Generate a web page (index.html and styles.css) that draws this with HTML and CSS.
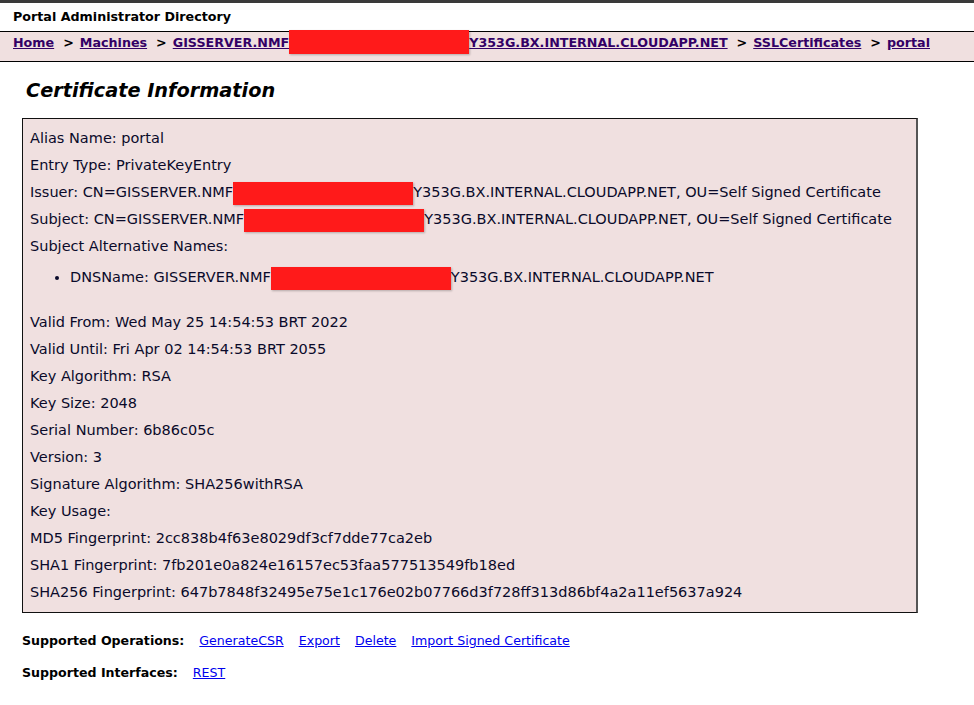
FILE: index.html
```html
<!DOCTYPE html>
<html>
<head>
<meta charset="utf-8">
<title>Portal Administrator Directory</title>
<link rel="stylesheet" href="styles.css">
</head>
<body>
<div class="topbar"></div>
<div class="title">Portal Administrator Directory</div>
<div class="crumbs">
  <a href="#">Home</a><span class="sep">&gt;</span><a href="#">Machines</a><span class="sep">&gt;</span><a href="#">GISSERVER.NMF<span class="redact crumb-redact"></span>Y353G.BX.INTERNAL.CLOUDAPP.NET</a><span class="sep">&gt;</span><a href="#">SSLCertificates</a><span class="sep">&gt;</span><a href="#">portal</a>
</div>
<div class="main">
  <h2 class="heading">Certificate Information</h2>
  <div class="box">
    <p>Alias Name: portal</p>
    <p>Entry Type: PrivateKeyEntry</p>
    <p>Issuer: CN=GISSERVER.NMF<span class="redact r1"></span>Y353G.BX.INTERNAL.CLOUDAPP.NET, OU=Self Signed Certificate</p>
    <p>Subject: CN=GISSERVER.NMF<span class="redact r1"></span>Y353G.BX.INTERNAL.CLOUDAPP.NET, OU=Self Signed Certificate</p>
    <p>Subject Alternative Names:</p>
    <ul class="names">
      <li>DNSName: GISSERVER.NMF<span class="redact r1"></span>Y353G.BX.INTERNAL.CLOUDAPP.NET</li>
    </ul>
    <p>Valid From: Wed May 25 14:54:53 BRT 2022</p>
    <p>Valid Until: Fri Apr 02 14:54:53 BRT 2055</p>
    <p>Key Algorithm: RSA</p>
    <p>Key Size: 2048</p>
    <p>Serial Number: 6b86c05c</p>
    <p>Version: 3</p>
    <p>Signature Algorithm: SHA256withRSA</p>
    <p>Key Usage:</p>
    <p>MD5 Fingerprint: 2cc838b4f63e8029df3cf7dde77ca2eb</p>
    <p>SHA1 Fingerprint: 7fb201e0a824e16157ec53faa577513549fb18ed</p>
    <p>SHA256 Fingerprint: 647b7848f32495e75e1c176e02b07766d3f728ff313d86bf4a2a11ef5637a924</p>
  </div>
  <div class="ops">
    <b>Supported Operations:</b>
    <a href="#">GenerateCSR</a><a href="#">Export</a><a href="#">Delete</a><a href="#">Import Signed Certificate</a>
  </div>
  <div class="ops ifaces">
    <b>Supported Interfaces:</b>
    <a href="#">REST</a>
  </div>
</div>
</body>
</html>
```

FILE: styles.css
```css
html, body {
  margin: 0;
  padding: 0;
  background: #ffffff;
}
body {
  font-family: "DejaVu Sans", Verdana, sans-serif;
  font-size: 13px;
  color: #000;
}
.topbar {
  height: 3px;
  background: #3a3a3a;
}
.title {
  font-weight: bold;
  font-size: 12.7px;
  padding: 6px 0 0 13px;
  height: 22px;
  line-height: 16px;
}
.crumbs {
  border-top: 1px solid #000;
  border-bottom: 1px solid #000;
  background: #f0e0e0;
  height: 29px;
  padding-left: 13px;
  line-height: 22px;
  font-weight: bold;
  font-size: 12.7px;
  white-space: nowrap;
}
.crumbs a {
  color: #330066;
  text-decoration: underline;
}
.crumbs .sep {
  margin: 0 6px 0 9px;
}
.redact {
  display: inline-block;
  background: #ff1a1a;
  box-shadow: 1px 1px 2px rgba(0,0,0,0.25);
  vertical-align: middle;
  height: 24px;
}
.crumb-redact {
  width: 180px;
  vertical-align: top;
  position: relative;
  top: -2px;
}
.r1 {
  width: 180px;
  height: 23px;
}
.main {
  padding-left: 22px;
}
.heading {
  font-size: 19.3px;
  font-style: italic;
  font-weight: bold;
  margin: 17px 0 15px 4px;
  line-height: 24px;
}
.box {
  width: 879px;
  border: 1px solid #111;
  border-right: 2px solid #555;
  background: #f0e0e0;
  padding: 6px 7px 6px 7px;
  color: #0a0a2a;
  font-size: 14.5px;
}
.box p {
  margin: 0;
  line-height: 27px;
  white-space: nowrap;
}
.names {
  margin: 4px 0 18px 0;
  padding-left: 40px;
  line-height: 27px;
  white-space: nowrap;
}
.ops {
  display: flex;
  gap: 15px;
  margin-top: 18px;
  line-height: 20px;
  font-size: 12.6px;
}
.ops a {
  color: #0000ee;
  text-decoration: underline;
}
.ifaces {
  margin-top: 12px;
}
```
